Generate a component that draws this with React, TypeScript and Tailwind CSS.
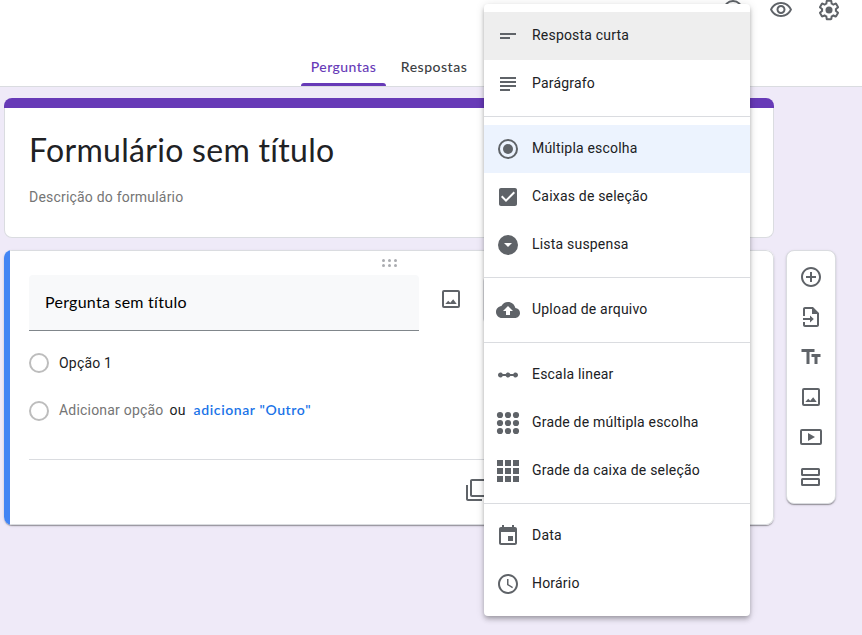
import type { ReactNode } from "react"

const RAISED = "shadow-[0_2px_1px_-1px_rgba(0,0,0,0.2),0_1px_1px_0_rgba(0,0,0,0.14),0_1px_3px_0_rgba(0,0,0,0.12)]"

function Icon({ children }: { children: ReactNode }) {
  return (
    <svg width="24" height="24" viewBox="0 0 24 24" fill="currentColor" className="block shrink-0 text-[#5f6368]">
      {children}
    </svg>
  )
}

const icons = {
  palette: <circle cx="12" cy="12" r="9" fill="none" stroke="currentColor" strokeWidth="2" />,
  preview: (
    <path d="M12 6c3.79 0 7.17 2.13 8.82 5.5C19.17 14.87 15.79 17 12 17s-7.17-2.13-8.82-5.5C4.83 8.13 8.21 6 12 6m0-2C7 4 2.73 7.11 1 11.5 2.73 15.89 7 19 12 19s9.27-3.11 11-7.5C21.27 7.11 17 4 12 4zm0 5c1.38 0 2.5 1.12 2.5 2.5S13.38 14 12 14s-2.5-1.12-2.5-2.5S10.62 9 12 9m0-2c-2.48 0-4.5 2.02-4.5 4.5S9.52 16 12 16s4.5-2.02 4.5-4.5S14.48 7 12 7z" />
  ),
  settings: (
    <>
      <path d="M13.85 22.25h-3.7c-.74 0-1.36-.54-1.45-1.27l-.27-1.89c-.27-.14-.53-.29-.79-.46l-1.8.72c-.7.26-1.47-.03-1.81-.65L2.2 15.53c-.35-.66-.2-1.44.36-1.88l1.53-1.19c-.01-.15-.02-.3-.02-.46 0-.15.01-.31.02-.46l-1.52-1.19c-.59-.45-.74-1.26-.37-1.88l1.85-3.19c.34-.62 1.11-.9 1.79-.63l1.81.73c.26-.17.52-.32.78-.46l.27-1.91c.09-.7.71-1.25 1.44-1.25h3.7c.74 0 1.36.54 1.45 1.27l.27 1.89c.27.14.53.29.79.46l1.8-.72c.71-.26 1.48.03 1.82.65l1.84 3.18c.36.66.2 1.44-.36 1.88l-1.52 1.19c.01.15.02.3.02.46s-.01.31-.02.46l1.52 1.19c.56.45.72 1.23.37 1.86l-1.86 3.22c-.34.62-1.11.9-1.8.63l-1.8-.72c-.26.17-.52.32-.78.46l-.27 1.91c-.1.68-.72 1.22-1.46 1.22zm-3.23-2h2.76l.37-2.55.53-.22c.44-.18.88-.44 1.34-.78l.45-.34 2.38.96 1.38-2.4-2.03-1.58.07-.56c.03-.26.06-.51.06-.78s-.03-.53-.06-.78l-.07-.56 2.03-1.58-1.39-2.4-2.39.96-.45-.35c-.42-.32-.87-.58-1.33-.77l-.52-.22-.37-2.55h-2.76l-.37 2.55-.53.21c-.44.19-.88.44-1.34.79l-.45.33-2.38-.95-1.39 2.39 2.03 1.58-.07.56a7 7 0 0 0-.06.79c0 .26.02.53.06.78l.07.56-2.03 1.58 1.38 2.4 2.39-.96.45.35c.43.33.86.58 1.33.77l.53.22.38 2.55z" />
      <circle cx="12" cy="12" r="3.5" />
    </>
  ),
  shortText: <path d="M4 9h16v2H4zM4 13h10v2H4z" />,
  paragraph: <path d="M4 5h16v2H4zM4 9h16v2H4zM4 13h16v2H4zM4 17h10v2H4z" />,
  radio: (
    <>
      <circle cx="12" cy="12" r="9" fill="none" stroke="currentColor" strokeWidth="2" />
      <circle cx="12" cy="12" r="5" />
    </>
  ),
  checkbox: (
    <path d="M19 3H5c-1.11 0-2 .9-2 2v14c0 1.1.89 2 2 2h14c1.11 0 2-.9 2-2V5c0-1.1-.89-2-2-2zm-9 14l-5-5 1.41-1.41L10 14.17l7.59-7.59L19 8l-9 9z" />
  ),
  dropdown: <path fillRule="evenodd" d="M12 2a10 10 0 1 0 0 20 10 10 0 0 0 0-20zM8 10h8l-4 4z" />,
  upload: (
    <path d="M19.35 10.04C18.67 6.59 15.64 4 12 4 9.11 4 6.6 5.64 5.35 8.04 2.34 8.36 0 10.91 0 14c0 3.31 2.69 6 6 6h13c2.76 0 5-2.24 5-5 0-2.64-2.05-4.78-4.65-4.96zM14 13v4h-4v-4H7l5-5 5 5h-3z" />
  ),
  scale: (
    <path d="M19.5 9.5c-1.03 0-1.9.62-2.29 1.5h-2.92C13.9 10.12 13.03 9.5 12 9.5s-1.9.62-2.29 1.5H6.79C6.4 10.12 5.53 9.5 4.5 9.5 3.12 9.5 2 10.62 2 12s1.12 2.5 2.5 2.5c1.03 0 1.9-.62 2.29-1.5h2.92c.39.88 1.26 1.5 2.29 1.5s1.9-.62 2.29-1.5h2.92c.39.88 1.26 1.5 2.29 1.5 1.38 0 2.5-1.12 2.5-2.5s-1.12-2.5-2.5-2.5z" />
  ),
  dotGrid: [4, 12, 20].map((y) => [4, 12, 20].map((x) => <circle key={`${x}-${y}`} cx={x} cy={y} r="3.1" />)),
  squareGrid: <path d="M1 1h6v6H1zM9 1h6v6H9zM17 1h6v6h-6zM1 9h6v6H1zM9 9h6v6H9zM17 9h6v6h-6zM1 17h6v6H1zM9 17h6v6H9zM17 17h6v6h-6z" />,
  date: (
    <path d="M17 12h-5v5h5v-5zM16 1v2H8V1H6v2H5c-1.11 0-1.99.9-1.99 2L3 19c0 1.1.89 2 2 2h14c1.1 0 2-.9 2-2V5c0-1.1-.9-2-2-2h-1V1h-2zm3 18H5V8h14v11z" />
  ),
  time: (
    <path d="M11.99 2C6.47 2 2 6.48 2 12s4.47 10 9.99 10C17.52 22 22 17.52 22 12S17.52 2 11.99 2zM12 20c-4.42 0-8-3.58-8-8s3.58-8 8-8 8 3.58 8 8-3.58 8-8 8zm.5-13H11v6l5.25 3.15.75-1.23-4.5-2.67z" />
  ),
  add: (
    <path d="M13 7h-2v4H7v2h4v4h2v-4h4v-2h-4V7zm-1-5C6.48 2 2 6.48 2 12s4.48 10 10 10 10-4.48 10-10S17.52 2 12 2zm0 18c-4.41 0-8-3.59-8-8s3.59-8 8-8 8 3.59 8 8-3.59 8-8 8z" />
  ),
  importQuestions: (
    <path d="M14 2H6c-1.1 0-2 .9-2 2v7h2V4h7v5h5v11H6v-3H4v3c0 1.1.9 2 2 2h12c1.1 0 2-.9 2-2V8l-6-6zM4 13v2h7v2.5l3.8-3.5L11 10.5V13z" />
  ),
  title: <path d="M2.5 4v3h5v12h3V7h5V4h-13zm19 5h-9v3h3v7h3v-7h3V9z" />,
  image: (
    <>
      <rect x="4" y="4" width="16" height="16" rx="1" fill="none" stroke="currentColor" strokeWidth="2" />
      <path d="M6.3 17l2.9-3.3 2 2 3-3.5L17.7 17z" />
    </>
  ),
  video: (
    <>
      <rect x="2" y="5" width="20" height="14" rx="1" fill="none" stroke="currentColor" strokeWidth="2" />
      <path d="M9 8v8l7-4z" />
    </>
  ),
  section: (
    <g fill="none" stroke="currentColor" strokeWidth="2">
      <rect x="3" y="4" width="17" height="6" rx="0.5" />
      <rect x="3" y="14" width="17" height="6" rx="0.5" />
    </g>
  ),
  copy: (
    <path d="M3 7H1v14c0 1.1.9 2 2 2h14v-2H3zM21 1H7c-1.1 0-2 .9-2 2v14c0 1.1.9 2 2 2h14c1.1 0 2-.9 2-2V3c0-1.1-.9-2-2-2zm0 16H7V3h14v14z" />
  ),
}

type IconName = keyof typeof icons

type MenuItem = { icon: IconName; label: string; state?: "hover" | "selected" }

const menuGroups: MenuItem[][] = [
  [
    { icon: "shortText", label: "Resposta curta", state: "hover" },
    { icon: "paragraph", label: "Parágrafo" },
  ],
  [
    { icon: "radio", label: "Múltipla escolha", state: "selected" },
    { icon: "checkbox", label: "Caixas de seleção" },
    { icon: "dropdown", label: "Lista suspensa" },
  ],
  [{ icon: "upload", label: "Upload de arquivo" }],
  [
    { icon: "scale", label: "Escala linear" },
    { icon: "dotGrid", label: "Grade de múltipla escolha" },
    { icon: "squareGrid", label: "Grade da caixa de seleção" },
  ],
  [
    { icon: "date", label: "Data" },
    { icon: "time", label: "Horário" },
  ],
]

const sideTools: IconName[] = ["add", "importQuestions", "title", "image", "video", "section"]

function Header() {
  return (
    <header className="relative h-[87px] shrink-0 border-b border-[#dadce0] bg-white">
      <div className="absolute -top-[2px] right-[21px] flex gap-6">
        <Icon>{icons.palette}</Icon>
        <Icon>{icons.preview}</Icon>
        <Icon>{icons.settings}</Icon>
      </div>
      <nav className="flex h-full items-end pl-[301px] font-[Lato] text-[14px] font-medium">
        <div className="flex h-[38px] w-[85px] flex-col items-center justify-between text-[#673ab7]">
          <span className="pt-[9px] leading-5 tracking-[0.45px]">Perguntas</span>
          <span className="h-[3px] w-full rounded-t-[3px] bg-[#673ab7]" />
        </div>
        <div className="flex h-[38px] w-[96px] justify-center text-[#3c4043]">
          <span className="pt-[9px] leading-5 tracking-[0.5px]">Respostas</span>
        </div>
      </nav>
    </header>
  )
}

function TitleCard() {
  return (
    <section className="h-[140px]">
      <div className="h-[10px] rounded-t-lg bg-[#673ab7]" />
      <div className="h-[130px] rounded-b-lg border border-t-0 border-[#dadce0] bg-white px-6 pt-[21px]">
        <h1 className="font-[Lato] text-[32px] leading-[42px] tracking-[0.3px] text-[#202124]">Formulário sem título</h1>
        <p className="mt-4 text-[14px] leading-5 tracking-[0.2px] text-[#757575]">Descrição do formulário</p>
      </div>
    </section>
  )
}

function Radio() {
  return <span className="size-5 rounded-full border-2 border-[#bdbdbd]" />
}

function QuestionCard() {
  return (
    <section className={`mt-3 flex h-[275px] overflow-hidden rounded-lg bg-white ${RAISED}`}>
      <div className="w-[6px] bg-[#4285f4]" />
      <div className="flex-1 rounded-r-lg border border-l-0 border-[#dadce0] pr-6 pl-[19px]">
        <div className="flex h-6 justify-center">
          <svg width="16" height="9" fill="#aaacb0" className="mt-[8px] ml-[2px]">
            {[1.5, 7.5, 13.5].map((x) => (
              <g key={x}>
                <circle cx={x} cy="1.5" r="1.5" />
                <circle cx={x} cy="6.5" r="1.5" />
              </g>
            ))}
          </svg>
        </div>
        <div className="flex h-14">
          <div className="flex w-[390px] items-center rounded-t border-b border-[#80868b] bg-[#f8f9fa] pb-[2px] pl-4 font-[Lato] text-[16px] tracking-[0.26px] text-black">
            Pergunta sem título
          </div>
          <div className="ml-5 pt-3">
            <Icon>{icons.image}</Icon>
          </div>
          <div className="mt-[2px] ml-5 h-[46px] w-[264px] rounded border border-[#dadce0]" />
        </div>
        <div className="mt-[22px] flex h-5 items-center gap-[10px] text-[14px] tracking-[0.2px] text-[#202124]">
          <Radio />
          <span>Opção 1</span>
        </div>
        <div className="mt-7 flex h-5 items-center text-[14px] tracking-[0.2px] text-[#202124]">
          <Radio />
          <span className="ml-[10px] pb-[2px] text-[#757575]">Adicionar opção</span>
          <span className="ml-[6px] pb-[2px]">ou</span>
          <span className="ml-2 pb-[3px] font-[Lato] font-semibold tracking-[0.6px] text-[#1a73e8]">adicionar "Outro"</span>
        </div>
        <div className="mt-[38px] border-t border-[#dadce0] pt-[18px] pl-[436px]">
          <Icon>{icons.copy}</Icon>
        </div>
      </div>
    </section>
  )
}

function SideToolbar() {
  return (
    <aside className={`mt-[152px] ml-3 flex h-[254px] w-[50px] flex-col items-center gap-4 rounded-lg border border-[#dadce0] bg-white pt-[14px] ${RAISED}`}>
      {sideTools.map((name) => (
        <Icon key={name}>{icons[name]}</Icon>
      ))}
    </aside>
  )
}

function TypeMenu() {
  return (
    <div className="absolute top-1 left-[484px] w-[266px] rounded bg-white py-2 shadow-[0_2px_4px_-1px_rgba(0,0,0,0.2),0_4px_5px_0_rgba(0,0,0,0.14),0_1px_10px_0_rgba(0,0,0,0.12)]">
      {menuGroups.map((group, i) => (
        <div key={i} className={i > 0 ? "mt-2 border-t border-[#dadce0] pt-2" : ""}>
          {group.map((item) => (
            <div
              key={item.label}
              className={`flex h-12 items-center gap-3 px-3 ${
                item.state === "hover" ? "bg-[#eeeeee]" : item.state === "selected" ? "bg-[#ecf3fe]" : ""
              }`}
            >
              <Icon>{icons[item.icon]}</Icon>
              <span className="pb-[2px] text-[14px] leading-5 tracking-[0.2px] text-[#202124]">{item.label}</span>
            </div>
          ))}
        </div>
      ))}
    </div>
  )
}

export default function App() {
  return (
    <div className="relative flex h-[635px] w-[862px] flex-col overflow-hidden bg-[#efeaf8] font-[Roboto]">
      <Header />
      <main className="flex flex-1 items-start pl-1">
        <div className="w-[770px] pt-[11px]">
          <TitleCard />
          <QuestionCard />
        </div>
        <div className="pt-[11px]">
          <SideToolbar />
        </div>
      </main>
      <TypeMenu />
    </div>
  )
}
